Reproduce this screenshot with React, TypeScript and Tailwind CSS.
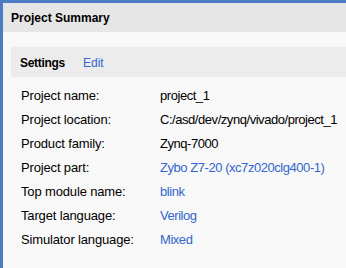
const rows: { label: string; value: string; link?: boolean }[] = [
  { label: 'Project name:', value: 'project_1' },
  { label: 'Project location:', value: 'C:/asd/dev/zynq/vivado/project_1' },
  { label: 'Product family:', value: 'Zynq-7000' },
  { label: 'Project part:', value: 'Zybo Z7-20 (xc7z020clg400-1)', link: true },
  { label: 'Top module name:', value: 'blink', link: true },
  { label: 'Target language:', value: 'Verilog', link: true },
  { label: 'Simulator language:', value: 'Mixed', link: true },
]

export default function App() {
  return (
    <div className="h-[268px] w-[346px] overflow-hidden border-l-[3px] border-t-[3px] border-[#4a7cc3] bg-[#f8f8f8] font-['Liberation_Sans',Arial,sans-serif] text-black">
      <div className="flex h-[29px] items-center bg-[#e6e6e6] pl-[8px] text-[12px] font-bold">
        Project Summary
      </div>
      <div className="pl-[8px] pt-[15px]">
        <div className="flex h-[30px] items-center gap-[18px] bg-[#ececec] pl-[9px] pt-[1px] text-[12px]">
          <span className="font-bold tracking-[-0.3px]">Settings</span>
          <span className="text-[#3366cc]">Edit</span>
        </div>
        <div className="flex flex-col pl-[10px] pt-[7px] text-[13px]">
          {rows.map((row) => (
            <div key={row.label} className="flex h-[24px] items-center">
              <span className="w-[139px] shrink-0 tracking-[-0.15px]">{row.label}</span>
              <span className={row.link ? 'tracking-[-0.45px] text-[#3366cc]' : 'tracking-[-0.45px]'}>{row.value}</span>
            </div>
          ))}
        </div>
      </div>
    </div>
  )
}
